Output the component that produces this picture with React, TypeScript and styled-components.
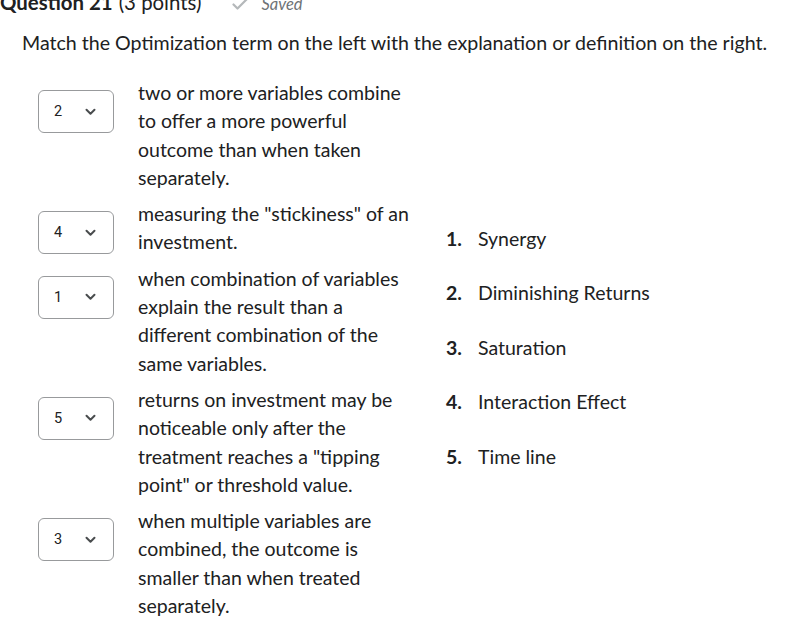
import React from "react";
import styled, { createGlobalStyle } from "styled-components";

const Global = createGlobalStyle`
  html, body { margin: 0; padding: 0; background: #fff; }
  body { font-family: Lato, "Noto Sans", sans-serif; color: #202122; overflow: hidden; }
`;

const Page = styled.div`
  width: 785px;
  height: 626px;
  overflow: hidden;
`;

const Header = styled.div`
  display: flex;
  align-items: baseline;
  margin-top: -10px;
  height: 24px;
  line-height: 24px;
`;

const Title = styled.h2`
  margin: 0;
  font-size: 20.4px;
  font-weight: 700;
  color: #202122;
`;

const Points = styled.span`
  font-weight: 400;
  margin-left: 6px;
`;

const SavedTag = styled.span`
  display: inline-flex;
  align-items: center;
  margin-left: 31px;
  font-size: 16.5px;
  font-style: italic;
  color: #6e7376;
  gap: 13px;
`;

const Prompt = styled.p`
  margin: 17px 0 0 22px;
  font-size: 19.6px;
  line-height: 24px;
`;

const Body = styled.div`
  display: flex;
  align-items: center;
  margin: 24px 0 0 38px;
`;

const Pairs = styled.div`
  display: flex;
  flex-direction: column;
  gap: 8px;
  width: 408px;
`;

const Pair = styled.div`
  display: grid;
  grid-template-columns: 76px 1fr;
  column-gap: 24px;
  align-items: start;
`;

const SelectBox = styled.div`
  box-sizing: border-box;
  margin-top: 11px;
  width: 76px;
  height: 43px;
  border: 1px solid #989a9c;
  border-radius: 6px;
  display: flex;
  align-items: center;
  padding: 0 0 0 15px;
  font-family: Roboto, "Liberation Sans", sans-serif;
  font-size: 14.5px;
  color: #202122;
  gap: 23px;
`;

const Definition = styled.div`
  font-size: 19.5px;
  line-height: 28.3px;
  max-width: 280px;
`;

const Choices = styled.ol`
  list-style: none;
  margin: -4px 0 0 0;
  padding: 0;
  display: flex;
  flex-direction: column;
  gap: 26.5px;
`;

const Choice = styled.li`
  display: flex;
  font-size: 19.5px;
  line-height: 28px;
`;

const ChoiceNum = styled.span`
  font-weight: 700;
  width: 32px;
`;

const Chevron = () => (
  <svg width="11" height="8" viewBox="0 0 11 8">
    <path d="M1.5 1.8 L5.5 5.8 L9.5 1.8" fill="none" stroke="#494c4e" strokeWidth="2" strokeLinecap="round" strokeLinejoin="round" />
  </svg>
);

const Check = () => (
  <svg width="16" height="12" viewBox="0 0 16 12">
    <path d="M1.5 6.5 L5.5 10.5 L14.5 1.5" fill="none" stroke="#b4b8ba" strokeWidth="2.2" strokeLinecap="round" strokeLinejoin="round" />
  </svg>
);

const pairs = [
  { value: "2", text: "two or more variables combine to offer a more powerful outcome than when taken separately." },
  { value: "4", text: 'measuring the "stickiness" of an investment.' },
  { value: "1", text: "when combination of variables explain the result than a different combination of the same variables." },
  { value: "5", text: 'returns on investment may be noticeable only after the treatment reaches a "tipping point" or threshold value.' },
  { value: "3", text: "when multiple variables are combined, the outcome is smaller than when treated separately." },
];

const choices = ["Synergy", "Diminishing Returns", "Saturation", "Interaction Effect", "Time line"];

export default function App() {
  return (
    <Page>
      <Global />
      <Header>
        <Title>
          Question 21<Points>(3 points)</Points>
        </Title>
        <SavedTag>
          <Check />
          Saved
        </SavedTag>
      </Header>
      <Prompt>Match the Optimization term on the left with the explanation or definition on the right.</Prompt>
      <Body>
        <Pairs>
          {pairs.map((p) => (
            <Pair key={p.value}>
              <SelectBox>
                <span>{p.value}</span>
                <Chevron />
              </SelectBox>
              <Definition>{p.text}</Definition>
            </Pair>
          ))}
        </Pairs>
        <Choices>
          {choices.map((c, i) => (
            <Choice key={c}>
              <ChoiceNum>{i + 1}.</ChoiceNum>
              {c}
            </Choice>
          ))}
        </Choices>
      </Body>
    </Page>
  );
}
